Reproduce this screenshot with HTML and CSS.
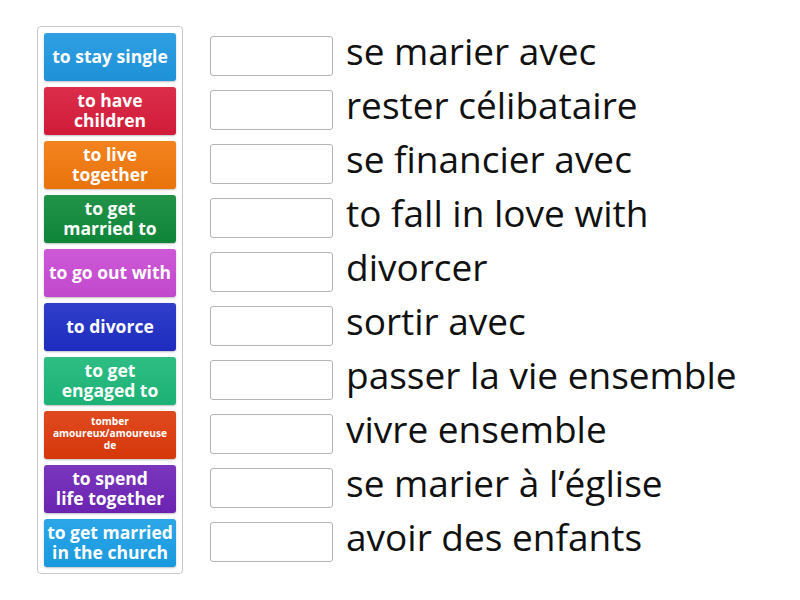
FILE: index.html
```html
<!DOCTYPE html>
<html lang="en">
<head>
    <meta charset="UTF-8">
    <title>Match up</title>
    <link rel="stylesheet" href="styles.css">
</head>
<body>
    <div class="game">
        <!-- Answer tiles -->
        <div class="tiles">
            <div class="tile blue">to stay single</div>
            <div class="tile red">to have<br>children</div>
            <div class="tile orange">to live<br>together</div>
            <div class="tile green">to get<br>married to</div>
            <div class="tile magenta">to go out with</div>
            <div class="tile navy">to divorce</div>
            <div class="tile teal">to get<br>engaged to</div>
            <div class="tile rust small">tomber<br>amoureux/amoureuse<br>de</div>
            <div class="tile purple">to spend<br>life together</div>
            <div class="tile sky">to get married<br>in the church</div>
        </div>

        <!-- Drop targets -->
        <div class="targets">
            <div class="row"><div class="slot"></div><span class="prompt">se marier avec</span></div>
            <div class="row"><div class="slot"></div><span class="prompt">rester célibataire</span></div>
            <div class="row"><div class="slot"></div><span class="prompt">se financier avec</span></div>
            <div class="row"><div class="slot"></div><span class="prompt">to fall in love with</span></div>
            <div class="row"><div class="slot"></div><span class="prompt">divorcer</span></div>
            <div class="row"><div class="slot"></div><span class="prompt">sortir avec</span></div>
            <div class="row"><div class="slot"></div><span class="prompt">passer la vie ensemble</span></div>
            <div class="row"><div class="slot"></div><span class="prompt">vivre ensemble</span></div>
            <div class="row"><div class="slot"></div><span class="prompt">se marier à l’église</span></div>
            <div class="row"><div class="slot"></div><span class="prompt">avoir des enfants</span></div>
        </div>
    </div>
</body>
</html>
```

FILE: styles.css
```css
/* Reset */
* {
    margin: 0;
    padding: 0;
    box-sizing: border-box;
    font-family: "Open Sans", sans-serif;
}

body {
    background-color: #fff;
    color: #111;
}

/* Page layout */
.game {
    display: flex;
    align-items: flex-start;
    gap: 27px;
    padding: 26px 0 0 37px;
}

/* Tile column */
.tiles {
    display: flex;
    flex-direction: column;
    gap: 6px;
    padding: 6px;
    border: 1px solid #c8c8c8;
    border-radius: 4px;
    width: 146px;
}

.tile {
    height: 48px;
    display: flex;
    align-items: center;
    justify-content: center;
    text-align: center;
    color: #fff;
    font-weight: bold;
    font-size: 17.5px;
    line-height: 20px;
    padding-bottom: 2px;
    border-radius: 3px;
    box-shadow: 0 1px 2px rgba(0, 0, 0, 0.25);
    background-image: linear-gradient(rgba(255, 255, 255, 0.08), rgba(0, 0, 0, 0.04));
}

.tile.small {
    font-size: 10.2px;
    line-height: 11.7px;
}

.blue { background-color: #1f97e0; }
.red { background-color: #d81c3b; }
.orange { background-color: #f2780c; }
.green { background-color: #0f8a3a; }
.magenta { background-color: #c94bd4; }
.navy { background-color: #1f2ec6; }
.teal { background-color: #1db87a; }
.rust { background-color: #dd3a0b; }
.purple { background-color: #6f25b8; }
.sky { background-color: #1a9fe6; }

/* Drop targets */
.targets {
    display: flex;
    flex-direction: column;
    padding-top: 4px;
}

.row {
    height: 54px;
    display: flex;
    align-items: flex-start;
    gap: 13px;
}

.slot {
    width: 123px;
    height: 40px;
    margin-top: 6px;
    border: 1px solid #b4b4b4;
    border-radius: 3px;
    background-color: #fff;
}

.prompt {
    font-size: 37px;
    line-height: 40px;
    margin-top: 1px;
    color: #111;
    white-space: nowrap;
}
```
